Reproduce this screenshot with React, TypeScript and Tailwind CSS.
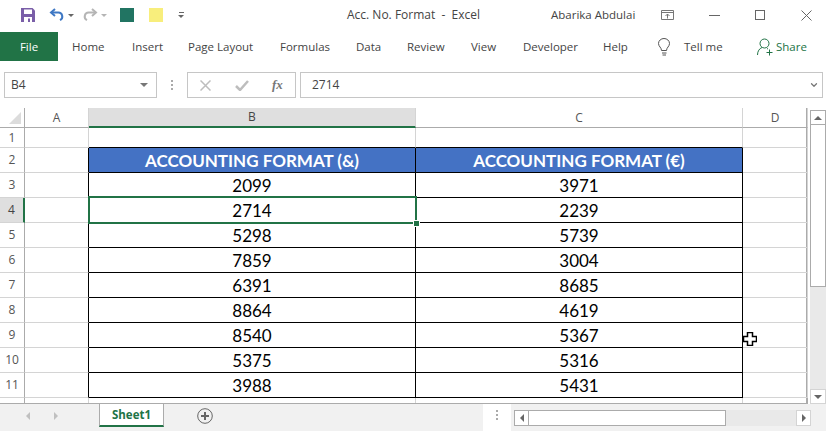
import { ChevronDown } from "lucide-react";

const ui = { fontFamily: '"Open Sans", "Noto Sans", sans-serif' };
const sheetFont = { fontFamily: 'Lato, "Open Sans", sans-serif' };

const tabs = [
  { label: "Home", width: "w-[60px]" },
  { label: "Insert", width: "w-[56px]" },
  { label: "Page Layout", width: "w-[92px]" },
  { label: "Formulas", width: "w-[76px]" },
  { label: "Data", width: "w-[51px]" },
  { label: "Review", width: "w-[64px]" },
  { label: "View", width: "w-[52px]" },
  { label: "Developer", width: "w-[80px]" },
  { label: "Help", width: "w-[54px]" },
];

const rows = [
  [2099, 3971],
  [2714, 2239],
  [5298, 5739],
  [7859, 3004],
  [6391, 8685],
  [8864, 4619],
  [8540, 5367],
  [5375, 5316],
  [3988, 5431],
];

const TitleBar = () => (
  <div className="flex h-[32px] items-center pb-[2px] text-[12px] text-[#444]">
    <svg className="ml-[21px]" width="14" height="14" viewBox="0 0 14 14">
      <path d="M0 0h11.5L14 2.5V14H0z" fill="#7a5ea8" />
      <rect x="3" y="1.5" width="8" height="4.5" fill="#fff" />
      <rect x="3" y="9" width="8" height="5" fill="#fff" />
      <rect x="7" y="10.5" width="2" height="3.5" fill="#7a5ea8" />
    </svg>
    <svg className="ml-[14px]" width="16" height="14" viewBox="0 0 16 14">
      <path d="M6 1 2 4.5 6 8" fill="none" stroke="#3f78c4" strokeWidth="2" />
      <path d="M2.5 4.5H9a4 4 0 0 1 2 7.6" fill="none" stroke="#3f78c4" strokeWidth="2" />
    </svg>
    <span className="ml-[3px] h-0 w-0 border-x-[3px] border-t-[3px] border-x-transparent border-t-[#666]" />
    <svg className="ml-[8px]" width="16" height="14" viewBox="0 0 16 14">
      <path d="M10 1l4 3.5L10 8" fill="none" stroke="#b5b5b5" strokeWidth="2" />
      <path d="M13.5 4.5H7a4 4 0 0 0-2 7.6" fill="none" stroke="#b5b5b5" strokeWidth="2" />
    </svg>
    <span className="ml-[3px] h-0 w-0 border-x-[3px] border-t-[3px] border-x-transparent border-t-[#b5b5b5]" />
    <span className="ml-[13px] h-[14px] w-[14px] bg-[#217462]" />
    <span className="ml-[15px] h-[14px] w-[14px] bg-[#f8ee7c]" />
    <span className="ml-[15px] flex w-[6px] flex-col items-center gap-[2px]">
      <span className="h-px w-[5px] bg-[#666]" />
      <span className="h-0 w-0 border-x-[3px] border-t-[3px] border-x-transparent border-t-[#666]" />
    </span>
    <span className="ml-[163px] w-[204px] whitespace-pre">Acc. No. Format  -  Excel</span>
    <span className="w-[110px] text-[11.5px]">Abarika Abdulai</span>
    <svg width="13" height="10" viewBox="0 0 13 10" fill="none" stroke="#777">
      <path d="M.5.5h12v9H.5zM.5 2.5h12M6.5 8.5V4M4.5 6l2-2 2 2" />
    </svg>
    <span className="ml-[35px] h-px w-[11px] bg-[#666]" />
    <span className="ml-[35px] h-[10px] w-[10px] border border-[#666]" />
    <svg className="ml-[36px]" width="11" height="11" viewBox="0 0 11 11" stroke="#666">
      <path d="M.5.5l10 10M10.5.5l-10 10" />
    </svg>
  </div>
);

const Ribbon = () => (
  <div className="flex h-[29px] items-center text-[11.5px] text-[#444]">
    <div className="mr-[14px] flex h-[29px] w-[58px] items-center justify-center bg-[#217346] text-white">File</div>
    {tabs.map((tab) => (
      <span key={tab.label} className={tab.width}>
        {tab.label}
      </span>
    ))}
    <svg width="14" height="18" viewBox="0 0 14 18" fill="none" stroke="#555" strokeWidth="1">
      <path d="M4.5 12.5c0-3-3-4-3-7a5.5 5 0 0 1 11 0c0 3-3 4-3 7zM5 15h4.500M5.500 17h3.500" />
    </svg>
    <span className="ml-[13px] w-[73px]">Tell me</span>
    <svg width="16" height="18" viewBox="0 0 16 18" fill="none" stroke="#217346" strokeWidth="1">
      <circle cx="7.500" cy="5.500" r="4.500" />
      <path d="M.5 17c0-4 2-6.500 4.500-7.500M10 10.500l1 .5M12.500 11.500v6M9.500 14.500h6" />
    </svg>
    <span className="ml-[3px] text-[#217346]">Share</span>
  </div>
);

const FormulaBar = () => (
  <div className="mt-[11px] flex h-[26px] items-stretch text-[12px] text-[#444]">
    <div className="ml-[4px] flex w-[153px] items-center justify-between border border-[#c6c6c6] pl-[6px] pr-[8px]">
      <span>B4</span>
      <span className="h-0 w-0 border-x-[4px] border-t-[4px] border-x-transparent border-t-[#777]" />
    </div>
    <div className="flex w-[30px] flex-col items-center justify-center gap-[2px]">
      <span className="h-[2px] w-[2px] bg-[#aaa]" />
      <span className="h-[2px] w-[2px] bg-[#aaa]" />
      <span className="h-[2px] w-[2px] bg-[#aaa]" />
    </div>
    <div className="flex w-[109px] items-center border border-[#c6c6c6]">
      <svg className="ml-[12px]" width="11" height="11" viewBox="0 0 11 11" stroke="#bdbdbd" strokeWidth="1.500">
        <path d="M.5.5l10 10M10.500.5l-10 10" />
      </svg>
      <svg className="ml-[24px]" width="14" height="11" viewBox="0 0 14 11" fill="none" stroke="#bdbdbd" strokeWidth="2.500">
        <path d="M1 6l4 4 8-9" />
      </svg>
      <span className="ml-[23px] font-['Liberation_Serif'] text-[13px] font-bold italic text-[#777]">fx</span>
    </div>
    <div className="ml-[4px] flex w-[523px] items-center justify-between border border-[#c6c6c6] pl-[11px] pr-[3px]">
      <span>2714</span>
      <ChevronDown size={10} strokeWidth={3} className="text-[#777]" />
    </div>
  </div>
);

const ColHeader = ({ label, active }: { label: string; active?: boolean }) => (
  <div
    className={
      active
        ? "flex items-center justify-center border-b-2 border-r border-b-[#217346] border-r-[#d4d4d4] bg-[#dfdfdf] text-[#444]"
        : "flex items-center justify-center border-b border-r border-b-[#ababab] border-r-[#d4d4d4] text-[#555]"
    }
  >
    {label}
  </div>
);

const RowHeader = ({ n, active }: { n: number; active?: boolean }) => (
  <div
    className={
      active
        ? "flex items-center justify-center border-b border-r-2 border-b-[#d4d4d4] border-r-[#217346] bg-[#dfdfdf] text-[12px] text-[#444]"
        : "flex items-center justify-center border-b border-r border-b-[#d4d4d4] border-r-[#ababab] text-[12px] text-[#555]"
    }
    style={ui}
  >
    {n}
  </div>
);

const emptyCell = "border-b border-r border-[#d4d4d4]";
const tableCell = "flex items-center justify-center border-b border-r border-black pt-[2px] text-[17px] text-black";
const headCell =
  "flex items-center justify-center border-b border-r border-black bg-[#4472c4] pt-[2px] text-[17px] font-bold text-white";

const Sheet = () => (
  <div className="mt-[10px] flex h-[296px]">
    <div
      className="grid h-[296px] w-[808px] grid-cols-[25px_64px_327px_327px_65px] grid-rows-[20px_20px_25px_25px_25px_25px_25px_25px_25px_25px_25px_25px_5px] border-b border-r-2 border-[#ababab]"
      style={sheetFont}
    >
      <div className="flex items-end justify-end border-b border-r border-[#ababab] pb-[3px] pr-[3px]">
        <span className="h-0 w-0 border-b-[12px] border-l-[12px] border-b-[#dcdcdc] border-l-transparent" />
      </div>
      <div className="contents text-[12px]" style={ui}>
        <ColHeader label="A" />
        <ColHeader label="B" active />
        <ColHeader label="C" />
        <ColHeader label="D" />
      </div>

      <RowHeader n={1} />
      <div className={emptyCell} />
      <div className="border-b border-r border-b-black border-r-[#d4d4d4]" />
      <div className="border-b border-r border-b-black border-r-[#d4d4d4]" />
      <div className={emptyCell} />

      <RowHeader n={2} />
      <div className="border-b border-r border-b-[#d4d4d4] border-r-black" />
      <div className={headCell}>ACCOUNTING FORMAT (&amp;)</div>
      <div className={headCell}>ACCOUNTING FORMAT (€)</div>
      <div className={emptyCell} />

      {rows.map(([b, c], i) => (
        <div key={b} className="contents">
          <RowHeader n={i + 3} active={i === 1} />
          <div className="border-b border-r border-b-[#d4d4d4] border-r-black" />
          <div className={i === 1 ? "relative " + tableCell : tableCell}>
            {b}
            {i === 1 && (
              <span className="absolute -bottom-[2px] -left-px -right-[2px] -top-[2px] z-10 border-2 border-[#217346]">
                <span className="absolute -bottom-[5px] -right-[5px] h-[7px] w-[7px] border border-white bg-[#217346]" />
              </span>
            )}
          </div>
          <div className={tableCell}>{c}</div>
          <div className={emptyCell} />
        </div>
      ))}

      <div className="border-r border-[#ababab]" />
      <div className="border-r border-[#d4d4d4]" />
      <div className="border-r border-[#d4d4d4]" />
      <div className="border-r border-[#d4d4d4]" />
      <div />
    </div>

    <div className="ml-[2px] mt-[2px] flex w-[16px] flex-col bg-[#e9e9e9]">
      <div className="flex h-[15px] items-center justify-center border border-[#ababab] bg-white">
        <span className="h-0 w-0 border-x-[4px] border-b-[4px] border-x-transparent border-b-[#666]" />
      </div>
      <div className="h-[162px] border-x border-b border-[#ababab] bg-white" />
      <div className="flex-1" />
      <div className="flex h-[15px] items-center justify-center border border-[#d4d4d4] bg-white">
        <span className="h-0 w-0 border-x-[4px] border-t-[4px] border-x-transparent border-t-[#666]" />
      </div>
    </div>

    {/* plus cursor over cell D9 */}
    <svg className="absolute left-[743px] top-[332px]" width="14" height="14" viewBox="0 0 14 14">
      <path d="M4.500.5h5v4h4v5h-4v4h-5v-4h-4v-5h4z" fill="#fff" stroke="#000" strokeWidth="1.500" />
    </svg>
  </div>
);

const SheetBar = () => (
  <div className="flex h-[27px] items-start bg-[#f1f1f1]">
    <span className="ml-[26px] mt-[8px] h-0 w-0 border-y-[4px] border-r-[4px] border-y-transparent border-r-[#c0c0c0]" />
    <span className="ml-[24px] mt-[8px] h-0 w-0 border-y-[4px] border-l-[4px] border-y-transparent border-l-[#c0c0c0]" />
    <div
      className="ml-[41px] flex h-[23px] w-[65px] items-center justify-center border-x border-b-2 border-x-[#ababab] border-b-[#217346] bg-white text-[11.5px] font-bold text-[#217346]"
      style={ui}
    >
      Sheet1
    </div>
    <svg className="ml-[33px] mt-[4px]" width="16" height="16" viewBox="0 0 16 16" fill="none" stroke="#666">
      <circle cx="8" cy="8" r="7.300" />
      <path d="M4 8h8M8 4v8" strokeWidth="2" />
    </svg>
    <div className="ml-[270px] flex h-full w-[28px] justify-center bg-white">
      <div className="mt-[6px] flex flex-col gap-[2px]">
        <span className="h-[2px] w-[2px] bg-[#aaa]" />
        <span className="h-[2px] w-[2px] bg-[#aaa]" />
        <span className="h-[2px] w-[2px] bg-[#aaa]" />
      </div>
    </div>
    <div className="ml-[3px] mt-[6px] flex h-[16px] w-[297px] bg-[#e9e9e9]">
      <div className="flex h-full w-[15px] items-center justify-center border border-[#ababab] bg-white">
        <span className="h-0 w-0 border-y-[4px] border-r-[4px] border-y-transparent border-r-[#666]" />
      </div>
      <div className="h-full w-[197px] border-y border-r border-[#ababab] bg-white" />
      <div className="flex-1" />
      <div className="flex h-full w-[15px] items-center justify-center border border-[#d4d4d4] bg-white">
        <span className="h-0 w-0 border-y-[4px] border-l-[4px] border-y-transparent border-l-[#666]" />
      </div>
    </div>
  </div>
);

const App = () => (
  <div className="relative h-[431px] w-[826px] overflow-hidden bg-white" style={ui}>
    <TitleBar />
    <Ribbon />
    <FormulaBar />
    <Sheet />
    <SheetBar />
  </div>
);

export default App;
